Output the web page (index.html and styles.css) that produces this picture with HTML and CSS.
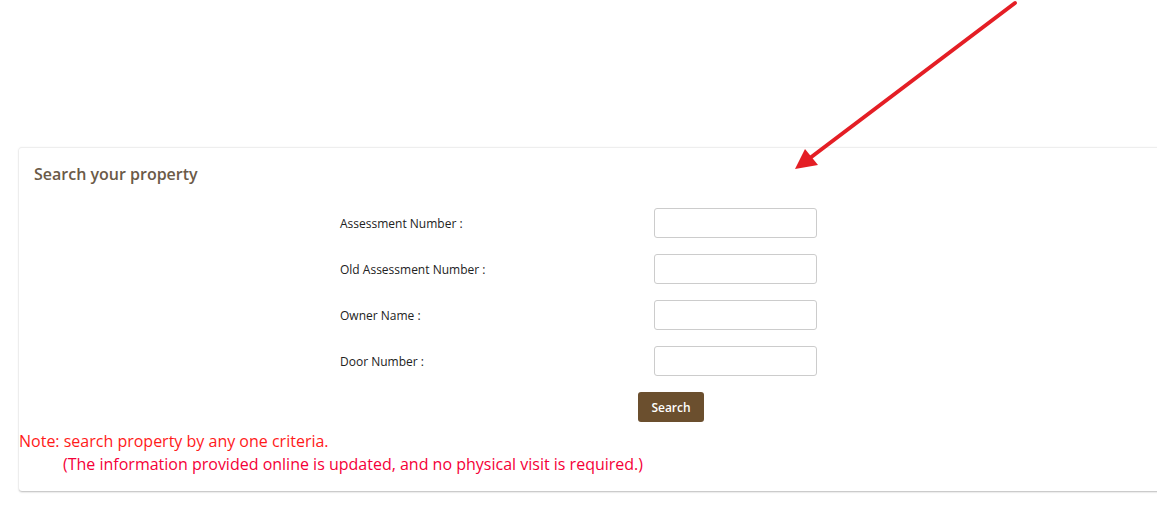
FILE: index.html
```html
<!DOCTYPE html>
<html>
<head>
<meta charset="utf-8">
<link rel="stylesheet" href="styles.css">
</head>
<body>
<div class="page">
  <div class="card">
    <h2 class="title">Search your property</h2>
    <form class="form">
      <div class="row"><label class="lbl">Assessment Number :</label><input class="inp" type="text"></div>
      <div class="row"><label class="lbl">Old Assessment Number :</label><input class="inp" type="text"></div>
      <div class="row"><label class="lbl">Owner Name :</label><input class="inp" type="text"></div>
      <div class="row"><label class="lbl">Door Number :</label><input class="inp" type="text"></div>
      <div class="btnrow"><button class="btn" type="button">Search</button></div>
    </form>
    <div class="note">
      <div class="note1">Note: search property by any one criteria.</div>
      <div class="note2">(The information provided online is updated, and no physical visit is required.)</div>
    </div>
  </div>
  <svg class="arrow" width="1157" height="200" viewBox="0 0 1157 200">
    <line x1="1015" y1="3" x2="810" y2="158" stroke="#e41e25" stroke-width="4" stroke-linecap="round"/>
    <polygon points="795,169 805,149 818,165" fill="#e41e25"/>
  </svg>
</div>
</body>
</html>
```
FILE: styles.css
```css
html, body {
  margin: 0;
  padding: 0;
  background: #fff;
}
body {
  font-family: "Open Sans", "Liberation Sans", sans-serif;
  overflow: hidden;
}
.page {
  position: relative;
  width: 1157px;
  height: 525px;
  padding-top: 147px;
  box-sizing: border-box;
}
.card {
  margin-left: 19px;
  width: 1160px;
  background: #fff;
  border-top: 1px solid #eeeeee;
  border-radius: 3px;
  box-shadow: 0 1px 2px rgba(0,0,0,0.28);
  padding: 15px 0 22px 0;
  box-sizing: border-box;
  height: 344px;
}
.title {
  margin: 0 0 0 15px;
  font-size: 16px;
  font-weight: 600;
  color: #6b5a47;
  line-height: 22px;
}
.form {
  margin: 23px 0 0 321px;
}
.row {
  display: flex;
  align-items: center;
  height: 30px;
  margin-bottom: 16px;
}
.lbl {
  width: 314px;
  font-size: 12px;
  color: #222;
}
.inp {
  width: 163px;
  height: 30px;
  box-sizing: border-box;
  border: 1px solid #ccc;
  border-radius: 3px;
  margin: 0;
  padding: 0 6px;
}
.btnrow {
  margin-left: 298px;
}
.btn {
  width: 66px;
  height: 30px;
  background: #6b4f2e;
  color: #fff;
  border: none;
  border-radius: 3px;
  font-family: "Open Sans", "Liberation Sans", sans-serif;
  font-size: 12px;
  font-weight: 600;
  padding: 0;
}
.note {
  margin-top: 8px;
  font-size: 16px;
  line-height: 23px;
}
.note1 {
  color: #ff1a1a;
}
.note2 {
  color: #f50038;
  padding-left: 44px;
}
.arrow {
  position: absolute;
  left: 0;
  top: 0;
}
```
